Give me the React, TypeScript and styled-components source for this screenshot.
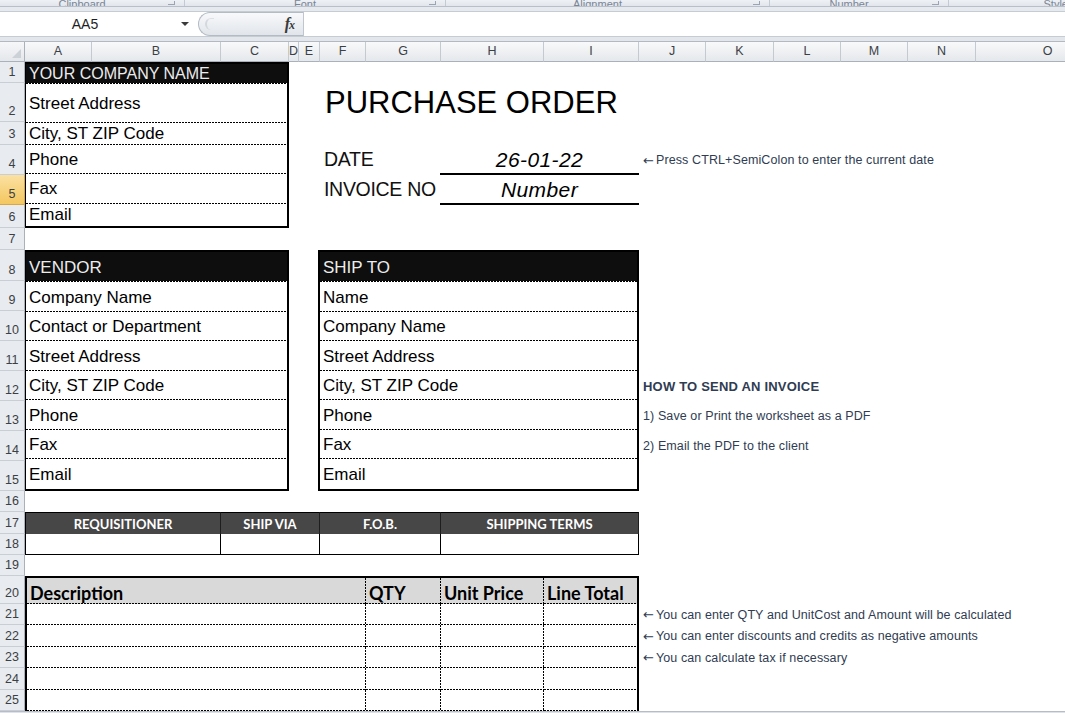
import React from "react";
import styled, { createGlobalStyle, css } from "styled-components";

const GlobalStyle = createGlobalStyle`
  html, body { margin: 0; padding: 0; background: #fff; overflow: hidden; }
  body { font-family: "Liberation Sans", Arial, sans-serif; }
  * { box-sizing: border-box; }
`;

const dotBottom = (gap: string) => css`
  background-image: linear-gradient(to right, #000 0 2px, ${gap} 2px 3px);
  background-size: 3px 1px;
  background-repeat: repeat-x;
  background-position: left bottom;
`;

const Page = styled.div`
  width: 1065px;
  height: 713px;
  overflow: hidden;
  display: flex;
  flex-direction: column;
  background: #e6e9ee;
`;

/* ---------- ribbon remnant ---------- */
const Ribbon = styled.div`
  height: 7px;
  flex: none;
  display: flex;
  overflow: hidden;
  background: linear-gradient(#eef1f5, #e2e6ec);
  border-bottom: 1px solid #b8bfc9;
`;

const RibbonGroup = styled.div<{ $w: number }>`
  width: ${(p) => p.$w}px;
  flex: none;
  display: flex;
  align-items: flex-end;
  overflow: hidden;
  border-right: 1px solid #c4cad3;
`;

const GroupLabel = styled.div`
  flex: 1;
  text-align: center;
  font-family: "Liberation Sans", Arial, sans-serif;
  font-size: 11px;
  line-height: 12px;
  height: 12px;
  flex-shrink: 0;
  color: #7a8596;
  margin-bottom: -4px;
`;

const Launcher = styled.div`
  width: 7px;
  height: 4px;
  margin: 0 9px 1px 4px;
  border-right: 1px solid #9aa4b2;
  border-bottom: 1px solid #9aa4b2;
  flex: none;
`;

/* ---------- formula bar ---------- */
const FormulaBar = styled.div`
  margin-top: 4px;
  height: 26px;
  flex: none;
  display: flex;
  background: #fff;
  border-top: 1px solid #c6ccd4;
  border-bottom: 1px solid #c6ccd4;
`;

const NameBox = styled.div`
  width: 198px;
  flex: none;
  display: flex;
  align-items: center;
`;

const NameText = styled.div`
  width: 170px;
  text-align: center;
  font-family: "Liberation Sans", Arial, sans-serif;
  font-size: 14px;
  color: #1e1e1e;
`;

const DropArrow = styled.div`
  width: 0;
  height: 0;
  margin-left: 11px;
  border-left: 4px solid transparent;
  border-right: 4px solid transparent;
  border-top: 4px solid #3a3a3a;
`;

const FxPill = styled.div`
  width: 105px;
  flex: none;
  display: flex;
  align-items: center;
  justify-content: space-between;
  padding: 0 9px 0 6px;
  border: 1px solid #b3bbc5;
  border-right: none;
  border-radius: 12px 0 0 12px;
  background: linear-gradient(#f8f9fb, #e1e5ea);
`;

const Grip = styled.div`
  width: 9px;
  height: 12px;
  border-radius: 6px 0 0 6px;
  border-left: 2px solid #d3d8de;
  border-top: 1px solid #dde1e6;
`;

const Fx = styled.div`
  font-family: "Liberation Serif", "Times New Roman", serif;
  font-style: italic;
  font-weight: bold;
  font-size: 16px;
  color: #3a3a3a;
  letter-spacing: -1px;
  small {
    font-size: 12px;
  }
`;

const FormulaInput = styled.div`
  flex: 1;
  border-left: 1px solid #c0c6cf;
`;

const HeaderGap = styled.div`
  height: 5px;
  flex: none;
  background: #e3e6ea;
  border-bottom: 1px solid #b3b9c2;
`;

/* ---------- sheet grid ---------- */
const Sheet = styled.div`
  flex: none;
  display: grid;
  width: 1120px;
  background: #fff;
  grid-template-columns: 25px 67px 129px 68px 10px 21px 46px 75px 103px 95px 67px 68px 67px 67px 68px 144px;
  grid-template-rows:
    20px 21px 39px 23px 30px 30px 23px 22px 31px repeat(7, 30px)
    21px 22px 21px 21px 28px 21px 22px 21px 22px 21px;
`;

const Corner = styled.div`
  grid-column: 1;
  grid-row: 1;
  display: flex;
  align-items: flex-end;
  justify-content: flex-end;
  padding: 0 3px 3px 0;
  background: linear-gradient(#f6f7f9, #e4e7eb);
  border-right: 1px solid #aab1bb;
  border-bottom: 1px solid #aab1bb;
`;

const CornerMark = styled.div`
  width: 0;
  height: 0;
  border-left: 9px solid transparent;
  border-bottom: 9px solid #ccd1d8;
`;

const ColHead = styled.div<{ $col: number }>`
  grid-row: 1;
  grid-column: ${(p) => p.$col};
  background: linear-gradient(#f8f9fa, #e5e8ec);
  border-right: 1px solid #c5cad1;
  border-bottom: 1px solid #aab1bb;
  font-family: "Liberation Sans", Arial, sans-serif;
  font-size: 12.5px;
  line-height: 19px;
  text-align: center;
  color: #3b3f46;
  overflow: hidden;
`;

const RowHead = styled.div<{ $row: number; $active?: boolean }>`
  grid-column: 1;
  grid-row: ${(p) => p.$row};
  display: flex;
  align-items: flex-end;
  justify-content: center;
  padding-bottom: 3px;
  font-family: "Liberation Sans", Arial, sans-serif;
  font-size: 12.5px;
  line-height: 14px;
  color: #3b3f46;
  background: ${(p) => (p.$active ? "linear-gradient(#fbe1a2, #f4c75f)" : "#e8ebef")};
  border-right: 1px solid ${(p) => (p.$active ? "#d9a842" : "#aab1bb")};
  border-bottom: 1px solid ${(p) => (p.$active ? "#d9a842" : "#c9ced5")};
`;

/* ---------- address boxes ---------- */
const InfoBox = styled.div<{ $col: string; $row: string; $rows: string; $thinLeft?: boolean; $pull?: number }>`
  grid-column: ${(p) => p.$col};
  grid-row: ${(p) => p.$row};
  display: grid;
  grid-template-rows: ${(p) => p.$rows};
  border: 2px solid #000;
  border-left-width: ${(p) => (p.$thinLeft ? 1 : 2)}px;
  margin-left: ${(p) => -(p.$pull ?? 0)}px;
  background: #fff;
  min-height: 0;
`;

const InfoRow = styled.div<{ $head?: boolean; $last?: boolean; $size?: number }>`
  display: flex;
  align-items: center;
  padding-left: 3px;
  min-height: 0;
  font-family: "Liberation Sans", Arial, sans-serif;
  font-size: ${(p) => p.$size ?? 17}px;
  line-height: 1;
  white-space: nowrap;
  color: ${(p) => (p.$head ? "#ececec" : "#000")};
  background-color: ${(p) => (p.$head ? "#0e0e0e" : "#fff")};
  ${(p) => (p.$last ? "" : dotBottom("#fff"))}
`;

/* ---------- title & fields ---------- */
const Title = styled.div`
  grid-column: 7 / 11;
  grid-row: 3;
  align-self: center;
  padding-left: 5px;
  font-family: "Liberation Sans", Arial, sans-serif;
  font-size: 31px;
  line-height: 1;
  color: #000;
  white-space: nowrap;
`;

const FieldLabel = styled.div<{ $row: number }>`
  grid-column: 7 / 9;
  grid-row: ${(p) => p.$row};
  align-self: center;
  padding-left: 4px;
  font-family: "Liberation Sans", Arial, sans-serif;
  font-size: 19.5px;
  line-height: 1;
  letter-spacing: -0.3px;
  color: #111;
  white-space: nowrap;
`;

const FieldValue = styled.div<{ $row: number }>`
  grid-column: 9 / 11;
  grid-row: ${(p) => p.$row};
  display: flex;
  align-items: center;
  justify-content: center;
  border-bottom: 2px solid #000;
  margin-left: -1px;
  font-family: "Liberation Sans", Arial, sans-serif;
  font-style: italic;
  font-size: 21px;
  letter-spacing: 0.4px;
  color: #000;
  padding-top: 1px;
`;

const Note = styled.div<{ $row: number; $bold?: boolean }>`
  grid-column: 11 / 17;
  grid-row: ${(p) => p.$row};
  display: flex;
  align-items: center;
  padding-left: 4px;
  font-family: "Liberation Sans", Arial, sans-serif;
  font-size: ${(p) => (p.$bold ? 13 : 12.5)}px;
  letter-spacing: ${(p) => (p.$bold ? 0.2 : 0.1)}px;
  font-weight: ${(p) => (p.$bold ? "bold" : "normal")};
  color: #2f3c52;
  white-space: nowrap;
`;

const Arrow = styled.span`
  font-family: "DejaVu Sans", sans-serif;
  font-size: 13px;
  line-height: 1;
  margin-right: 2px;
`;

/* ---------- shipping table ---------- */
const ShipHead = styled.div<{ $col: string; $first?: boolean }>`
  grid-column: ${(p) => p.$col};
  grid-row: 18;
  display: flex;
  align-items: center;
  justify-content: center;
  background: #474747;
  color: #fff;
  font-family: Lato, "Liberation Sans", sans-serif;
  font-weight: bold;
  font-size: 13px;
  border-top: 1px solid #000;
  border-right: 1px solid #1e1e1e;
  border-left: ${(p) => (p.$first ? "1px solid #000" : "none")};
`;

const ShipCell = styled.div<{ $col: string; $first?: boolean }>`
  grid-column: ${(p) => p.$col};
  grid-row: 19;
  background: #fff;
  border-right: 1px solid #000;
  border-bottom: 1px solid #000;
  border-left: ${(p) => (p.$first ? "1px solid #000" : "none")};
`;

/* ---------- item table ---------- */
const ItemCell = styled.div<{ $col: string; $row: number; $head?: boolean; $first?: boolean; $last?: boolean }>`
  grid-column: ${(p) => p.$col};
  grid-row: ${(p) => p.$row};
  display: flex;
  align-items: center;
  padding: ${(p) => (p.$head ? "3px 0 0 3px" : "0 0 0 3px")};
  font-family: Lato, "Liberation Sans", sans-serif;
  font-weight: bold;
  font-size: 18px;
  color: #000;
  white-space: nowrap;
  background-color: ${(p) => (p.$head ? "#d9d9d9" : "#fff")};
  border-top: ${(p) => (p.$head ? "2px solid #000" : "none")};
  border-left: ${(p) => (p.$first ? "2px solid #000" : "none")};
  border-right: ${(p) => (p.$last ? "2px solid #000" : "none")};
  background-image: linear-gradient(to right, #000 0 2px, transparent 2px 3px)
    ${(p) => (p.$last ? "" : ", linear-gradient(to bottom, #000 0 2px, transparent 2px 3px)")};
  background-size: 3px 1px ${(p) => (p.$last ? "" : ", 1px 3px")};
  background-repeat: repeat-x ${(p) => (p.$last ? "" : ", repeat-y")};
  background-position: left bottom ${(p) => (p.$last ? "" : ", right top")};
`;

const TabBar = styled.div`
  flex: 1;
  background: #dfe3e8;
  border-top: 1px solid #b7bdc6;
`;

const ribbonGroups = [
  { label: "Clipboard", w: 185 },
  { label: "Font", w: 261 },
  { label: "Alignment", w: 324 },
  { label: "Number", w: 179 },
  { label: "Styles", w: 240 },
];

const columns = "ABCDEFGHIJKLMNO".split("");

const itemCols: { col: string; label: string }[] = [
  { col: "2 / 8", label: "Description" },
  { col: "8 / 9", label: "QTY" },
  { col: "9 / 10", label: "Unit Price" },
  { col: "10 / 11", label: "Line Total" },
];

const shipCols = [
  { col: "2 / 4", label: "REQUISITIONER" },
  { col: "4 / 7", label: "SHIP VIA" },
  { col: "7 / 9", label: "F.O.B." },
  { col: "9 / 11", label: "SHIPPING TERMS" },
];

const vendorRows = ["Company Name", "Contact or Department", "Street Address", "City, ST ZIP Code", "Phone", "Fax", "Email"];
const shipRows = ["Name", "Company Name", "Street Address", "City, ST ZIP Code", "Phone", "Fax", "Email"];
const companyRows = ["Street Address", "City, ST ZIP Code", "Phone", "Fax", "Email"];

export default function App() {
  return (
    <Page>
      <GlobalStyle />
      <Ribbon>
        {ribbonGroups.map((g) => (
          <RibbonGroup key={g.label} $w={g.w}>
            <GroupLabel>{g.label}</GroupLabel>
            <Launcher />
          </RibbonGroup>
        ))}
      </Ribbon>
      <FormulaBar>
        <NameBox>
          <NameText>AA5</NameText>
          <DropArrow />
        </NameBox>
        <FxPill>
          <Grip />
          <Fx>
            f<small>x</small>
          </Fx>
        </FxPill>
        <FormulaInput />
      </FormulaBar>
      <HeaderGap />
      <Sheet>
        <Corner>
          <CornerMark />
        </Corner>
        {columns.map((c, i) => (
          <ColHead key={c} $col={i + 2}>
            {c}
          </ColHead>
        ))}
        {Array.from({ length: 25 }, (_, i) => (
          <RowHead key={i} $row={i + 2} $active={i + 1 === 5}>
            {i + 1}
          </RowHead>
        ))}

        <InfoBox $col="2 / 5" $row="2 / 8" $rows="21fr 39fr 23fr 30fr 30fr 23fr" $thinLeft>
          <InfoRow $head $size={16}>
            YOUR COMPANY NAME
          </InfoRow>
          {companyRows.map((r, i) => (
            <InfoRow key={r} $last={i === companyRows.length - 1}>
              {r}
            </InfoRow>
          ))}
        </InfoBox>

        <Title>PURCHASE ORDER</Title>
        <FieldLabel $row={5}>DATE</FieldLabel>
        <FieldValue $row={5}>26-01-22</FieldValue>
        <FieldLabel $row={6}>INVOICE NO</FieldLabel>
        <FieldValue $row={6}>Number</FieldValue>
        <Note $row={5}>
          <Arrow>←</Arrow>Press CTRL+SemiColon to enter the current date
        </Note>

        <InfoBox $col="2 / 5" $row="9 / 17" $rows="31fr repeat(7, 30fr)" $thinLeft>
          <InfoRow $head>VENDOR</InfoRow>
          {vendorRows.map((r, i) => (
            <InfoRow key={r} $last={i === vendorRows.length - 1}>
              {r}
            </InfoRow>
          ))}
        </InfoBox>

        <InfoBox $col="7 / 11" $row="9 / 17" $rows="31fr repeat(7, 30fr)" $pull={2}>
          <InfoRow $head>SHIP TO</InfoRow>
          {shipRows.map((r, i) => (
            <InfoRow key={r + i} $last={i === shipRows.length - 1}>
              {r}
            </InfoRow>
          ))}
        </InfoBox>

        <Note $row={13} $bold>
          HOW TO SEND AN INVOICE
        </Note>
        <Note $row={14}>1) Save or Print the worksheet as a PDF</Note>
        <Note $row={15}>2) Email the PDF to the client</Note>

        {shipCols.map((c, i) => (
          <ShipHead key={c.label} $col={c.col} $first={i === 0}>
            {c.label}
          </ShipHead>
        ))}
        {shipCols.map((c, i) => (
          <ShipCell key={c.label} $col={c.col} $first={i === 0} />
        ))}

        {itemCols.map((c, i) => (
          <ItemCell key={c.label} $col={c.col} $row={21} $head $first={i === 0} $last={i === itemCols.length - 1}>
            {c.label}
          </ItemCell>
        ))}
        {[22, 23, 24, 25, 26].map((r) =>
          itemCols.map((c, i) => (
            <ItemCell key={c.label + r} $col={c.col} $row={r} $first={i === 0} $last={i === itemCols.length - 1} />
          ))
        )}

        <Note $row={22}>
          <Arrow>←</Arrow>You can enter QTY and UnitCost and Amount will be calculated
        </Note>
        <Note $row={23}>
          <Arrow>←</Arrow>You can enter discounts and credits as negative amounts
        </Note>
        <Note $row={24}>
          <Arrow>←</Arrow>You can calculate tax if necessary
        </Note>
      </Sheet>
      <TabBar />
    </Page>
  );
}
